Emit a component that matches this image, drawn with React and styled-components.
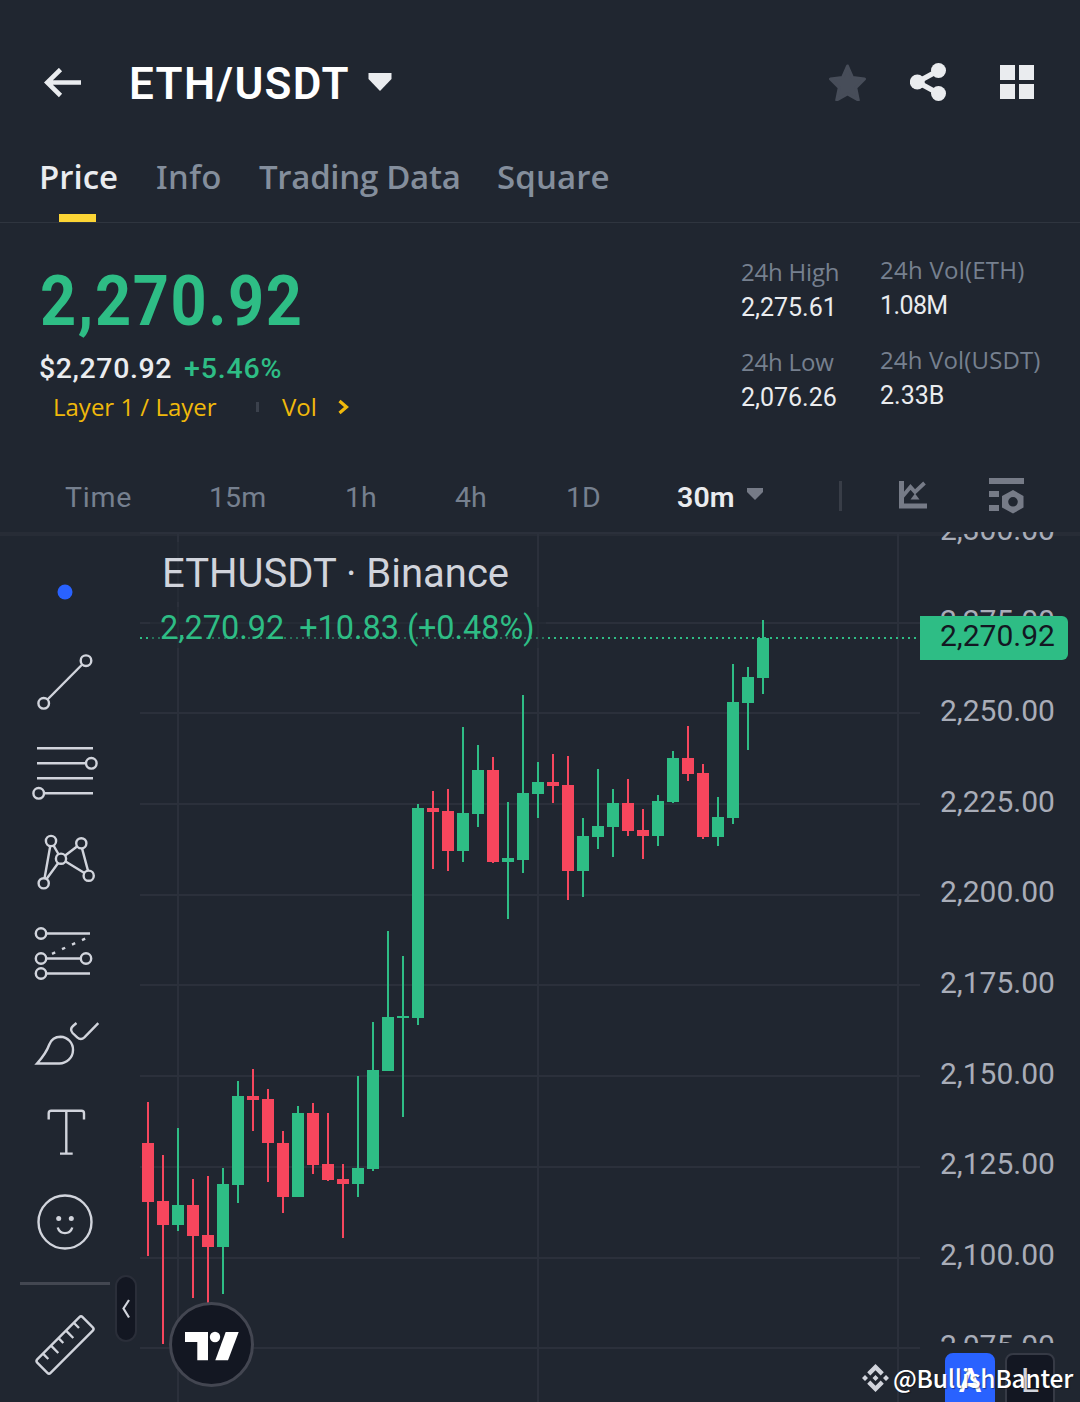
import React from 'react'
import styled, { createGlobalStyle } from 'styled-components';

const GlobalStyle = createGlobalStyle`
* { box-sizing: border-box; }
body {
  margin: 0;
  background: #202630;
  font-family: Roboto, "Liberation Sans", sans-serif;
  overflow: hidden;
}
svg { display: block; flex: none; }
`
const Container = styled.div`
width: 1080px;
height: 1402px;
display: flex;
flex-direction: column;
position: relative;
overflow: hidden;
background: #202630;
color: #eaecef;`

const Header = styled.header`
display: flex;
align-items: center;
height: 132px;
padding: 33px 46px 0 44px;
`
const Pair = styled.h1`
  margin: 0 18px 0 47px;
  padding-top: 3px;
  font-size: 44px;
  line-height: 50px;
  font-weight: 600;
  letter-spacing: 1.3px;
  color: #fff;
  white-space: nowrap;
`
const HeaderActions = styled.div`
display: flex;
align-items: center;
margin-left: auto;
padding-bottom: 2px;
`
const ActionIcon = styled.div`
margin-left: ${(p) => p.$gap}px;
`

const Tabs = styled.nav`
display: flex;
gap: 38px;
height: 91px;
padding: 22px 0 0 39px;
border-bottom: 1px solid #2f353f;
`
const Tab = styled.div`
display: flex;
flex-direction: column;
justify-content: space-between;
width: ${(p) => p.$width}px;
font-family: ${(p) => p.$face || '"Open Sans"'}, sans-serif;
font-size: 33px;
line-height: 46px;
font-weight: ${(p) => p.$weight || 600};
letter-spacing: ${(p) => p.$spacing || 0}px;
color: ${(p) => (p.$active ? '#eaecef' : '#848e9c')};
white-space: nowrap;
`
const TabLine = styled.div`
width: 37px;
height: 8px;
margin-left: 20px;
background: #fcd535;
`

const Summary = styled.section`
display: flex;
justify-content: space-between;
height: 237px;
padding: 0 39px 0 39px;
`
const PriceBlock = styled.div`
padding-top: 38px;
`
const LastPrice = styled.div`
margin-left: 1px;
font-size: 70px;
line-height: 80px;
font-weight: 700;
letter-spacing: 1.8px;
color: #2ebd85;
transform: scaleX(0.9);
transform-origin: left;
`
const FiatRow = styled.div`
display: flex;
gap: 12px;
margin-top: 8px;
font-size: 28.5px;
line-height: 40px;
font-weight: 500;
letter-spacing: 0.6px;
`
const Change = styled.span`
color: #2ebd85;
letter-spacing: 0.8px;
`
const TagRow = styled.div`
display: flex;
align-items: center;
margin-top: -1px;
padding-left: 14px;
font-family: "Open Sans", sans-serif;
font-size: 24px;
line-height: 38px;
color: #f0b90b;
`
const TagDivider = styled.i`
width: 3px;
height: 10px;
margin: 0 23px 0 40px;
background: #3b414c;
`
const TagText = styled.span`
width: ${(p) => p.$width}px;
white-space: nowrap;
`
const Stats = styled.div`
display: flex;
`
const StatColumn = styled.div`
width: ${(p) => p.$width}px;
padding-top: ${(p) => p.$top}px;
`
const Stat = styled.div`
margin-bottom: 20px;
line-height: 35px;
white-space: nowrap;
`
const StatLabel = styled.div`
font-family: "Open Sans", sans-serif;
font-size: 24px;
letter-spacing: ${(p) => p.$spacing || 0}px;
color: #76808f;
`
const StatValue = styled.div`
position: relative;
top: 1px;
font-size: 25px;
font-weight: 450;
letter-spacing: ${(p) => p.$spacing || 0}px;
`

const Intervals = styled.div`
display: flex;
align-items: center;
height: 72px;
padding-left: 65px;
font-size: 28.5px;
color: #76808f;
`
const Interval = styled.span`
width: ${(p) => p.$width}px;
padding: 2px 0 0 ${(p) => p.$inset || 0}px;
letter-spacing: ${(p) => (p.$spacing ?? 0.1)}px;
white-space: nowrap;
color: ${(p) => (p.$active ? '#eaecef' : 'inherit')};
font-weight: ${(p) => (p.$active ? 600 : 400)};
`
const IntervalDivider = styled.i`
width: 3px;
height: 30px;
margin: 0 57px 0 76px;
background: #383d47;
`
const SettingsIcon = styled.div`
margin-left: 62px;
`

const ChartArea = styled.main`
display: flex;
height: 870px;
background: linear-gradient(#272c36 4px, transparent 4px);
position: relative;
`
const Toolbar = styled.aside`
width: 140px;
padding: 15px 0 0 20px;
`
const ToolIcon = styled.svg`
width: 90px;
height: 90px;
fill: none;
stroke: #d1d4dc;
stroke-width: 2.4;
`
const ToolDivider = styled.div`
width: 90px;
height: 3px;
margin: 15px 0;
background: #434751;
`
const CollapseButton = styled.div`
position: absolute;
left: 115px;
top: 743px;
width: 22px;
height: 67px;
border: 2px solid #2a2e39;
border-radius: 11px;
background: #131722;
`
const Legend = styled.div`
position: absolute;
left: 150px;
top: 10px;
`
const LegendTitle = styled.div`
width: 372px;
height: 60px;
padding-left: 12px;
font-size: 40px;
line-height: 63px;
color: #d1d4dc;
background: #20263080;
white-space: nowrap;
`
const LegendValues = styled.div`
display: flex;
gap: 15px;
width: 396px;
height: 41px;
margin-top: 5px;
padding-left: 10px;
font-size: 32.4px;
line-height: 43px;
color: #2ebd85;
background: #20263080;
white-space: nowrap;
`
const BrandBadge = styled.div`
position: absolute;
left: 169px;
top: 770px;
width: 85px;
height: 85px;
border: 3px solid #434651;
border-radius: 50%;
background: #131722;
`
const PriceBadge = styled.div`
position: absolute;
left: 920px;
top: 84px;
width: 148px;
height: 44px;
padding-left: 20px;
border-radius: 0 6px 6px 0;
background: #2ebd85;
color: #131722;
font-size: 30px;
line-height: 40px;
`
const ScaleButtons = styled.div`
position: absolute;
left: 945px;
top: 821px;
display: flex;
gap: 10px;
`
const ScaleButton = styled.div`
width: 50px;
height: 60px;
border-radius: 8px;
border: 2px solid ${(p) => (p.$active ? '#2962ff' : '#363a45')};
background: ${(p) => (p.$active ? '#2962ff' : '#131722')};
color: ${(p) => (p.$active ? '#fff' : '#d1d4dc')};
font-size: 34px;
font-weight: ${(p) => (p.$active ? 500 : 400)};
line-height: 50px;
text-align: center;
`
const Watermark = styled.div`
position: absolute;
left: 862px;
top: 1359px;
display: flex;
align-items: center;
gap: 4px;
font-family: "Noto Sans CJK SC", "Noto Sans", sans-serif;
font-size: 24.5px;
font-weight: 500;
line-height: 38px;
letter-spacing: -0.2px;
color: #fff;
text-shadow: 1px 1px 1px #0006;
`

// u = up, d = down: [direction, high, body top, body bottom, low]
const CANDLES = [
  ['d', 1102, 1143, 1202, 1256],
  ['d', 1155, 1201, 1225, 1344],
  ['u', 1128, 1205, 1225, 1231],
  ['d', 1179, 1205, 1236, 1298],
  ['d', 1176, 1235, 1247, 1320],
  ['u', 1168, 1184, 1247, 1294],
  ['u', 1081, 1096, 1185, 1203],
  ['d', 1069, 1096, 1100, 1131],
  ['d', 1089, 1099, 1143, 1182],
  ['d', 1131, 1143, 1197, 1213],
  ['u', 1106, 1113, 1197, 1197],
  ['d', 1103, 1113, 1165, 1174],
  ['d', 1113, 1164, 1180, 1181],
  ['d', 1164, 1179, 1184, 1238],
  ['u', 1076, 1168, 1184, 1197],
  ['u', 1022, 1070, 1169, 1171],
  ['u', 931, 1017, 1071, 1071],
  ['u', 956, 1016, 1018, 1117],
  ['u', 804, 808, 1018, 1025],
  ['d', 791, 808, 812, 869],
  ['d', 789, 811, 851, 871],
  ['u', 727, 813, 851, 862],
  ['u', 745, 770, 814, 827],
  ['d', 757, 770, 862, 863],
  ['u', 802, 858, 862, 919],
  ['u', 695, 793, 860, 873],
  ['u', 762, 782, 794, 818],
  ['d', 754, 782, 786, 803],
  ['d', 756, 785, 871, 900],
  ['u', 818, 836, 871, 897],
  ['u', 769, 826, 837, 849],
  ['u', 789, 803, 827, 857],
  ['d', 779, 803, 831, 836],
  ['d', 809, 830, 836, 859],
  ['u', 795, 801, 836, 846],
  ['u', 751, 758, 802, 803],
  ['d', 726, 758, 774, 781],
  ['d', 764, 773, 837, 839],
  ['u', 797, 817, 837, 846],
  ['u', 664, 702, 818, 824],
  ['u', 667, 677, 703, 750],
  ['u', 620, 638, 678, 694],
];

const GRID_ROWS = [532, 622, 712, 803, 894, 984, 1075, 1166, 1257, 1347];
const GRID_COLUMNS = [177, 537, 897];
const PRICES = [
  ['2,300.00', 540],
  ['2,275.00', 630.5],
  ['2,250.00', 721],
  ['2,225.00', 812],
  ['2,200.00', 902],
  ['2,175.00', 993],
  ['2,150.00', 1084],
  ['2,125.00', 1174],
  ['2,100.00', 1265],
  ['2,075.00', 1356],
];

const Candle = ({ index, data }) => {
  const [dir, high, top, bottom, low] = data;
  const x = 148 + index * 15;
  return (
    <g fill={dir === 'u' ? '#2ebd85' : '#f6465d'}>
      <rect x={x - 1} y={high} width="2" height={low - high} />
      <rect x={x - 6} y={top} width="12" height={bottom - top} />
    </g>
  )
}

const Chart = () => (
  <svg width="940" height="870" viewBox="140 532 940 870" shapeRendering="crispEdges">
    <clipPath id="scale"><rect x="920" y="532" width="160" height="811" /></clipPath>
    <g fill="#2b303b">
      {GRID_ROWS.map((y) => <rect key={y} x="140" y={y} width="780" height="2" />)}
      {GRID_COLUMNS.map((x) => <rect key={x} x={x} y="532" width="2" height="870" />)}
    </g>
    <path d="M140 638H918" stroke="#2ebd85" strokeWidth="2" strokeDasharray="2 4" />
    {CANDLES.map((c, i) => <Candle key={i} index={i} data={c} />)}
    <g clipPath="url(#scale)" fill="#a9adb8" fontFamily="Roboto" fontSize="30">
      {PRICES.map(([label, y]) => <text key={label} x="940" y={y}>{label}</text>)}
    </g>
  </svg>
)

const Tools = () => (
  <Toolbar>
    <ToolIcon><circle cx="45" cy="45" r="7.5" fill="#2962ff" stroke="none" /></ToolIcon>
    <ToolIcon>
      <circle cx="66" cy="23.7" r="5.3" />
      <circle cx="23.7" cy="66.3" r="5.3" />
      <path d="M27.5 62.5L62.2 27.5" />
    </ToolIcon>
    <ToolIcon>
      <path d="M17 21.3H73M17 36.3H66M17 51.3H73M24 66.3H73" />
      <circle cx="71.3" cy="36.3" r="5.3" />
      <circle cx="18.7" cy="66.3" r="5.3" />
    </ToolIcon>
    <ToolIcon>
      <path d="M30.2 29.3L24.6 61M33.6 28.6L38.4 37M38 46.2L26.7 61.8M45.2 38.5L57 29.5M62.1 31.6L67.9 53.4M45.6 44.5L64 55.8" />
      <circle cx="31" cy="24" r="5.1" />
      <circle cx="61.3" cy="26.3" r="5.1" />
      <circle cx="41" cy="41.7" r="5.1" />
      <circle cx="68.7" cy="58.7" r="5.1" />
      <circle cx="23.7" cy="66.3" r="5.1" />
    </ToolIcon>
    <ToolIcon>
      <path d="M26.5 26.5H70M26.5 51.5H60.5M26.5 66.5H70" />
      <path d="M32 46.8L66 31.2" strokeDasharray="3.5 7.5" />
      <circle cx="21" cy="26.5" r="5.2" />
      <circle cx="21" cy="51.5" r="5.2" />
      <circle cx="66" cy="51.5" r="5.2" />
      <circle cx="21" cy="66.5" r="5.2" />
    </ToolIcon>
    <ToolIcon>
      <path d="M17 66.5H39A13.6 13.6 0 0 0 53 53A13 13 0 0 0 40.5 39.7C34.5 39.7 31 43 29.3 47.5C27 54 22 61 17 66.5Z" />
      <path d="M56.5 26L53 29C50.8 31 50.7 33.8 52.6 36L57.2 40.4C59.5 42.5 62.2 42.5 64.4 40.4L78.3 26.2" />
    </ToolIcon>
    <ToolIcon>
      <path d="M28.7 32.5V26.2Q28.7 23.7 31.2 23.7H61.5Q64 23.7 64 26.2V32.5M46.3 23.7V66.5M40 66.6H52.7" />
    </ToolIcon>
    <ToolIcon>
      <circle cx="45" cy="45" r="26.5" />
      <circle cx="38.7" cy="41.5" r="2.5" fill="#d1d4dc" stroke="none" />
      <circle cx="51.3" cy="41.5" r="2.5" fill="#d1d4dc" stroke="none" />
      <path d="M37.7 50.5C40 58 50 58 52.3 50.5" />
    </ToolIcon>
    <ToolDivider />
    <ToolIcon strokeLinejoin="round">
      <path d="M59.4 17.1Q61 15.5 62.6 17.1L72.8 27.4Q74.4 29 72.8 30.6L30.6 72.9Q29 74.5 27.4 72.9L17.2 62.6Q15.6 61 17.2 59.4Z" />
      <path d="M23 53.7L28.3 59M31 45.7L38.3 53M38.5 38.2L43.3 43M46 30.7L53.3 38M54 23L59 28" />
    </ToolIcon>
  </Toolbar>
)

const App = () => {
  return (
    <Container>
      <GlobalStyle />
      <Header>
        <svg width="38" height="30" viewBox="0 0 38 30" fill="none" stroke="#eaecef" strokeWidth="4.6">
          <path d="M16.5 1.5L3.2 14.5L16.5 27.5M3.5 14.5H37" />
        </svg>
        <Pair>ETH/USDT</Pair>
        <svg width="24" height="20" viewBox="0 0 24 20"><path d="M.5 0H23.5V6L12 18L.5 6Z" fill="#eaecef" /></svg>
        <HeaderActions>
          <ActionIcon $gap={0}>
            <svg width="38" height="38" viewBox="0 0 38 38">
              <path d="M18.5 3L23.5 14.5L35.5 16L26.8 24.8L29.3 37L18.5 31L7.7 37L10.2 24.8L1.5 16L13.5 14.5Z" fill="#474d59" stroke="#474d59" strokeWidth="3" strokeLinejoin="round" />
            </svg>
          </ActionIcon>
          <ActionIcon $gap={43}>
            <svg width="36" height="38" viewBox="0 0 36 38" fill="#eaecef">
              <path d="M28.5 7.5L7.5 19L28.5 30.5" fill="none" stroke="#eaecef" strokeWidth="5.4" />
              <circle cx="28.5" cy="7.5" r="7.5" />
              <circle cx="7.3" cy="19" r="7.5" />
              <circle cx="28.5" cy="30.5" r="7.5" />
            </svg>
          </ActionIcon>
          <ActionIcon $gap={54}>
            <svg width="34" height="34" viewBox="0 0 34 34"><path d="M0 0H15V15H0ZM19 0H34V15H19ZM0 19H15V34H0ZM19 19H34V34H19Z" fill="#eaecef" /></svg>
          </ActionIcon>
        </HeaderActions>
      </Header>

      <Tabs>
        <Tab $active $width={79}>Price<TabLine /></Tab>
        <Tab $width={65} $weight={500} $spacing={0.4} $face={'"Noto Sans"'}>Info</Tab>
        <Tab $width={200} $spacing={-0.3}>Trading Data</Tab>
        <Tab $width={112} $spacing={0.1}>Square</Tab>
      </Tabs>

      <Summary>
        <PriceBlock>
          <LastPrice>2,270.92</LastPrice>
          <FiatRow>
            <span>$2,270.92</span>
            <Change>+5.46%</Change>
          </FiatRow>
          <TagRow>
            <TagText $width={163}>Layer 1 / Layer</TagText>
            <TagDivider />
            <TagText $width={56}>Vol</TagText>
            <svg width="12" height="16" viewBox="0 0 12 16" fill="none" stroke="#f0b90b" strokeWidth="3.2"><path d="M1.5 2L8.5 8L1.5 14" /></svg>
          </TagRow>
        </PriceBlock>
        <Stats>
          <StatColumn $width={139} $top={31}>
            <Stat>
              <StatLabel $spacing={-0.2}>24h High</StatLabel>
              <StatValue>2,275.61</StatValue>
            </Stat>
            <Stat>
              <StatLabel $spacing={-0.2}>24h Low</StatLabel>
              <StatValue>2,076.26</StatValue>
            </Stat>
          </StatColumn>
          <StatColumn $width={161} $top={29}>
            <Stat>
              <StatLabel $spacing={0.25}>24h Vol(ETH)</StatLabel>
              <StatValue $spacing={-0.6}>1.08M</StatValue>
            </Stat>
            <Stat>
              <StatLabel $spacing={0.15}>24h Vol(USDT)</StatLabel>
              <StatValue>2.33B</StatValue>
            </Stat>
          </StatColumn>
        </Stats>
      </Summary>

      <Intervals>
        <Interval $width={143} $spacing={0.8}>Time</Interval>
        <Interval $width={136} $inset={1}>15m</Interval>
        <Interval $width={111} $inset={1}>1h</Interval>
        <Interval $width={110}>4h</Interval>
        <Interval $width={111} $inset={1}>1D</Interval>
        <Interval $width={71} $inset={1} $active>30m</Interval>
        <svg width="16" height="16" viewBox="0 0 16 16"><path d="M0 0H16V4L8 12L0 4Z" fill="#767b87" /></svg>
        <IntervalDivider />
        <svg width="28" height="30" viewBox="0 0 28 30" fill="none" stroke="#767b87">
          <path d="M2.5 0V25H28" strokeWidth="5" />
          <path d="M3.5 15.5L11.5 6L16 11L25.5 2" strokeWidth="3.8" />
          <path d="M16 12.5L20.5 18.5H11.5Z" fill="#767b87" stroke="none" />
        </svg>
        <SettingsIcon>
          <svg width="35" height="36" viewBox="0 0 35 36" fill="#767b87">
            <path d="M0 0H35V6H0ZM0 13H10V19H0ZM0 27H10V33H0Z" />
            <path fillRule="evenodd" d="M24 12L34.5 18V29.5L24 35.5L13 29.5V18ZM24 19A4.8 4.8 0 1 0 24 28.6A4.8 4.8 0 1 0 24 19Z" />
          </svg>
        </SettingsIcon>
      </Intervals>

      <ChartArea>
        <Tools />
        <Chart />
        <Legend>
          <LegendTitle>ETHUSDT · Binance</LegendTitle>
          <LegendValues>
            <span>2,270.92</span>
            <span>+10.83 (+0.48%)</span>
          </LegendValues>
        </Legend>
        <CollapseButton>
          <svg width="18" height="63" viewBox="0 0 18 63" fill="none" stroke="#d1d4dc" strokeWidth="2.2"><path d="M12 23L6.5 31.5L12 40.5" /></svg>
        </CollapseButton>
        <BrandBadge>
          <svg width="79" height="79" viewBox="172 1305 79 79" fill="#fff">
            <path d="M185 1332H208V1360.3H197.3V1342H185Z" />
            <circle cx="215" cy="1337" r="5.2" />
            <path d="M225.7 1332H238.7L228 1360.3H215.3Z" />
          </svg>
        </BrandBadge>
        <PriceBadge>2,270.92</PriceBadge>
        <ScaleButtons>
          <ScaleButton $active>A</ScaleButton>
          <ScaleButton>L</ScaleButton>
        </ScaleButtons>
      </ChartArea>

      <Watermark>
        <svg width="27" height="28" viewBox="0 0 27 28" fill="#d1d4dc">
          <path d="M13.5 0L21.8 8.3L18.7 11.4L13.5 6.2L8.3 11.4L5.2 8.3ZM13.5 28L5.2 19.7L8.3 16.6L13.5 21.8L18.7 16.6L21.8 19.7Z" />
          <path d="M3 11L6 14L3 17L0 14ZM24 11L27 14L24 17L21 14ZM13.5 11L16.5 14L13.5 17L10.5 14Z" />
        </svg>
        @BullishBanter
      </Watermark>
    </Container>
  )
}

export default App
